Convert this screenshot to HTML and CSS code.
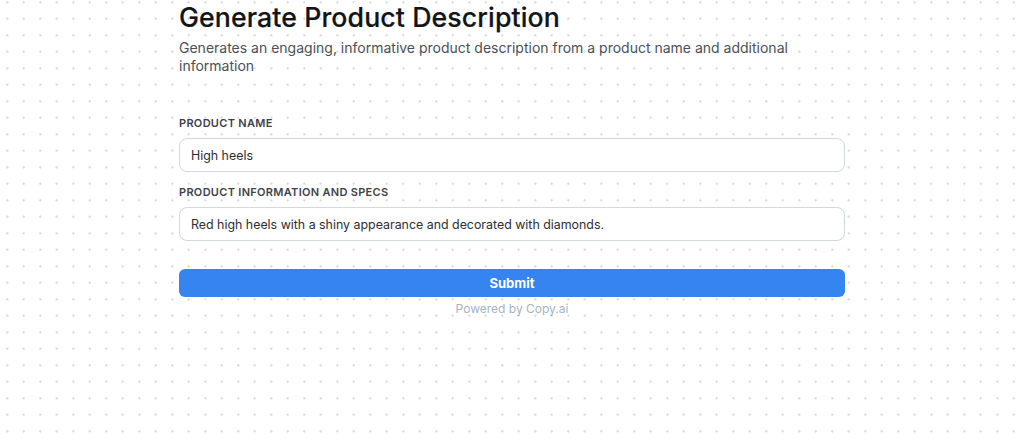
FILE: index.html
```html
<!DOCTYPE html>
<html lang="en">
<head>
<meta charset="utf-8">
<title>Generate Product Description</title>
<link rel="stylesheet" href="styles.css">
</head>
<body>
<main class="page">
  <header class="head">
    <h1 class="title">Generate Product Description</h1>
    <p class="subtitle">Generates an engaging, informative product description from a product name and additional information</p>
  </header>
  <form class="form">
    <div class="field">
      <label class="label" for="pname">Product Name</label>
      <input class="input" id="pname" type="text" value="High heels">
    </div>
    <div class="field">
      <label class="label" for="pinfo">Product Information and Specs</label>
      <input class="input" id="pinfo" type="text" value="Red high heels with a shiny appearance and decorated with diamonds.">
    </div>
    <button class="submit" type="button">Submit</button>
    <p class="powered">Powered by Copy.ai</p>
  </form>
</main>
</body>
</html>
```
FILE: styles.css
```css
html, body {
  margin: 0;
  padding: 0;
  height: 100%;
}
body {
  font-family: Inter, "Noto Sans", sans-serif;
  background-color: #ffffff;
  background-image: radial-gradient(circle, #d4d6da 0.9px, transparent 1.3px);
  background-size: 16.5px 16.5px;
  background-position: -1px -6px;
  color: #111827;
}
.page {
  width: 666px;
  margin: 0 auto;
}
.title {
  margin: 0;
  font-size: 26.7px;
  line-height: 34px;
  font-weight: 500;
  color: #121418;
  letter-spacing: 0.1px;
  -webkit-text-stroke: 0.2px #121418;
}
.subtitle {
  margin: 5px 0 0;
  font-size: 14px;
  line-height: 18px;
  color: #4b5058;
}
.form {
  margin-top: 41px;
  display: flex;
  flex-direction: column;
}
.field {
  display: flex;
  flex-direction: column;
  margin-bottom: 13px;
}
.label {
  font-size: 11px;
  font-weight: 600;
  text-transform: uppercase;
  letter-spacing: 0.3px;
  color: #3e424a;
  line-height: 14px;
  margin: 0 0 8px;
}
.input {
  box-sizing: border-box;
  height: 34px;
  border: 1px solid #cfdadb;
  border-radius: 8px;
  padding: 0 11px;
  font-family: inherit;
  font-size: 12.4px;
  color: #2b2e33;
  background: #ffffff;
  outline: none;
}
.submit {
  margin-top: 15px;
  height: 28px;
  border: none;
  border-radius: 6px;
  background: #3584f0;
  color: #ffffff;
  font-family: inherit;
  font-size: 13px;
  font-weight: 700;
  cursor: pointer;
}
.powered {
  margin: 4px 0 0;
  text-align: center;
  font-size: 12px;
  line-height: 16px;
  color: #a5b4c3;
}
```
